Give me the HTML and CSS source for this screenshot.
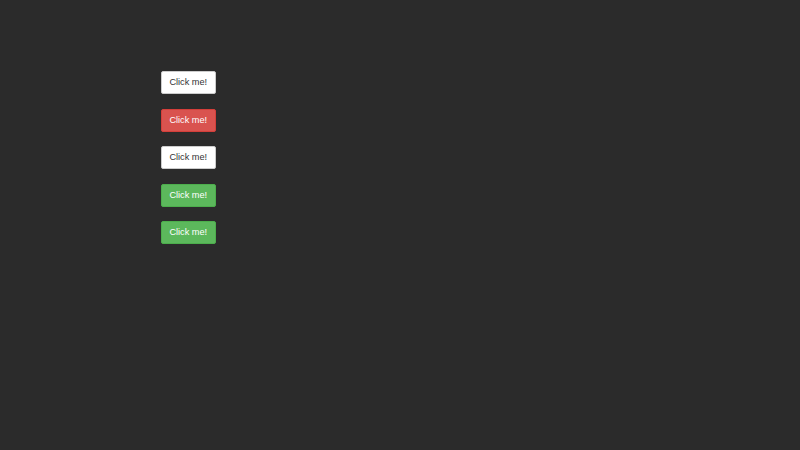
FILE: index.html
```html
<!DOCTYPE html>
<html>
<head>
<meta charset="utf-8">
<link rel="stylesheet" href="styles.css">
</head>
<body>
<div class="stack">
  <button class="btn btn-default">Click me!</button>
  <button class="btn btn-danger">Click me!</button>
  <button class="btn btn-default">Click me!</button>
  <button class="btn btn-success">Click me!</button>
  <button class="btn btn-success">Click me!</button>
</div>
</body>
</html>
```
FILE: styles.css
```css
html, body {
  margin: 0;
  height: 100%;
  background: #2b2b2b;
}
body {
  font-family: "Liberation Sans", Arial, sans-serif;
}
.stack {
  display: flex;
  flex-direction: column;
  align-items: flex-start;
  gap: 14.5px;
  padding: 71px 0 0 161px;
}
.btn {
  font-family: "Liberation Sans", Arial, sans-serif;
  font-size: 9.2px;
  line-height: 13px;
  padding: 4px 7.4px;
  border: 1px solid transparent;
  border-radius: 2px;
  margin: 0;
  cursor: pointer;
}
.btn-default {
  background: #ffffff;
  color: #333333;
  border-color: #cccccc;
}
.btn-danger {
  background: #d9534f;
  color: #ffffff;
  border-color: #d43f3a;
}
.btn-success {
  background: #5cb85c;
  color: #ffffff;
  border-color: #4cae4c;
}
```
